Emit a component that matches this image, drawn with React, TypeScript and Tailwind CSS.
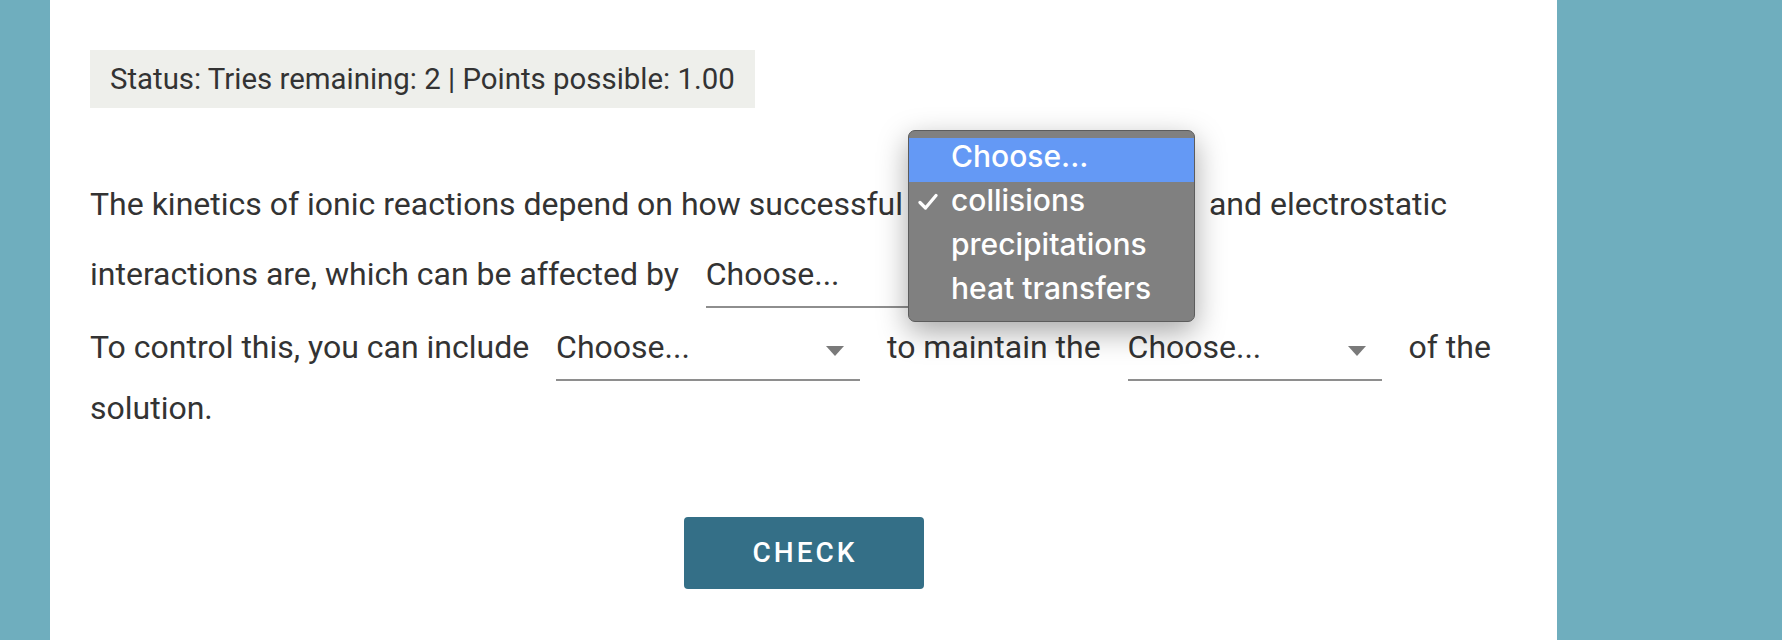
import React from "react";

function Arrow() {
  return (
    <svg width="18" height="10" viewBox="0 0 18 10" className="mt-2 mr-4 shrink-0" aria-hidden="true">
      <path d="M0 0 L18 0 L9 10 Z" fill="#7a7a7a" />
    </svg>
  );
}

function Choose({ width = "w-[252px]" }: { width?: string }) {
  return (
    <span
      className={`mx-[19px] my-[10px] inline-flex ${width} items-center justify-between border-b-2 border-[#8e8e8e] pb-4 leading-8 text-[#333]`}
    >
      <span>Choose...</span>
      <Arrow />
    </span>
  );
}

const options = ["Choose...", "collisions", "precipitations", "heat transfers"];

function OptionsMenu() {
  return (
    <div className="absolute left-[858px] top-[130px] w-[287px] h-[192px] rounded-[7px] border border-[#5c5c5c] bg-[#808080] pt-[7px] shadow-[0_10px_30px_rgba(0,0,0,0.35)] font-['Inter',sans-serif] text-[30px] font-medium text-white">
      {options.map((o, i) => (
        <div
          key={o}
          className={`relative flex h-[44px] items-start pl-[42px] leading-[37px] ${i === 0 ? "bg-[#6499f5]" : ""}`}
        >
          {i === 1 && (
            <svg width="20" height="18" viewBox="0 0 20 18" className="absolute left-[9px] top-[11px]" aria-hidden="true">
              <path d="M2 9.5 L7.5 15 L18 2.5" fill="none" stroke="white" strokeWidth="3.2" strokeLinecap="round" strokeLinejoin="round" />
            </svg>
          )}
          {o}
        </div>
      ))}
    </div>
  );
}

export default function App() {
  return (
    <div className="flex min-h-[640px] bg-[#6faebe] font-['Roboto',sans-serif]">
      <div className="relative ml-[50px] w-[1507px] bg-white px-[40px] pt-[50px] text-[#333]">
        <div className="inline-block h-[58px] bg-[#eeefeb] px-5 pt-px text-[29.4px] leading-[56px]">
          Status: Tries remaining: 2 | Points possible: 1.00
        </div>

        <p className="mt-[70px] text-[32px] leading-[34px]">
          The kinetics of ionic reactions depend on how successful <Choose /> and electrostatic interactions are,
          which can be affected by <Choose />.
        </p>
        <p className="mt-[3px] text-[32px] leading-[34px]">
          To control this, you can include <Choose width="w-[304px]" /> to maintain the{" "}
          <Choose width="w-[254px]" /> of the solution.
        </p>

        <div className="mt-[92px] flex justify-center">
          <button className="h-[72px] w-[240px] rounded-[4px] bg-[#346f87] pl-[3px] text-[28px] font-medium uppercase tracking-[3px] text-white">
            Check
          </button>
        </div>

        <OptionsMenu />
      </div>
      <div className="flex-1" />
    </div>
  );
}
